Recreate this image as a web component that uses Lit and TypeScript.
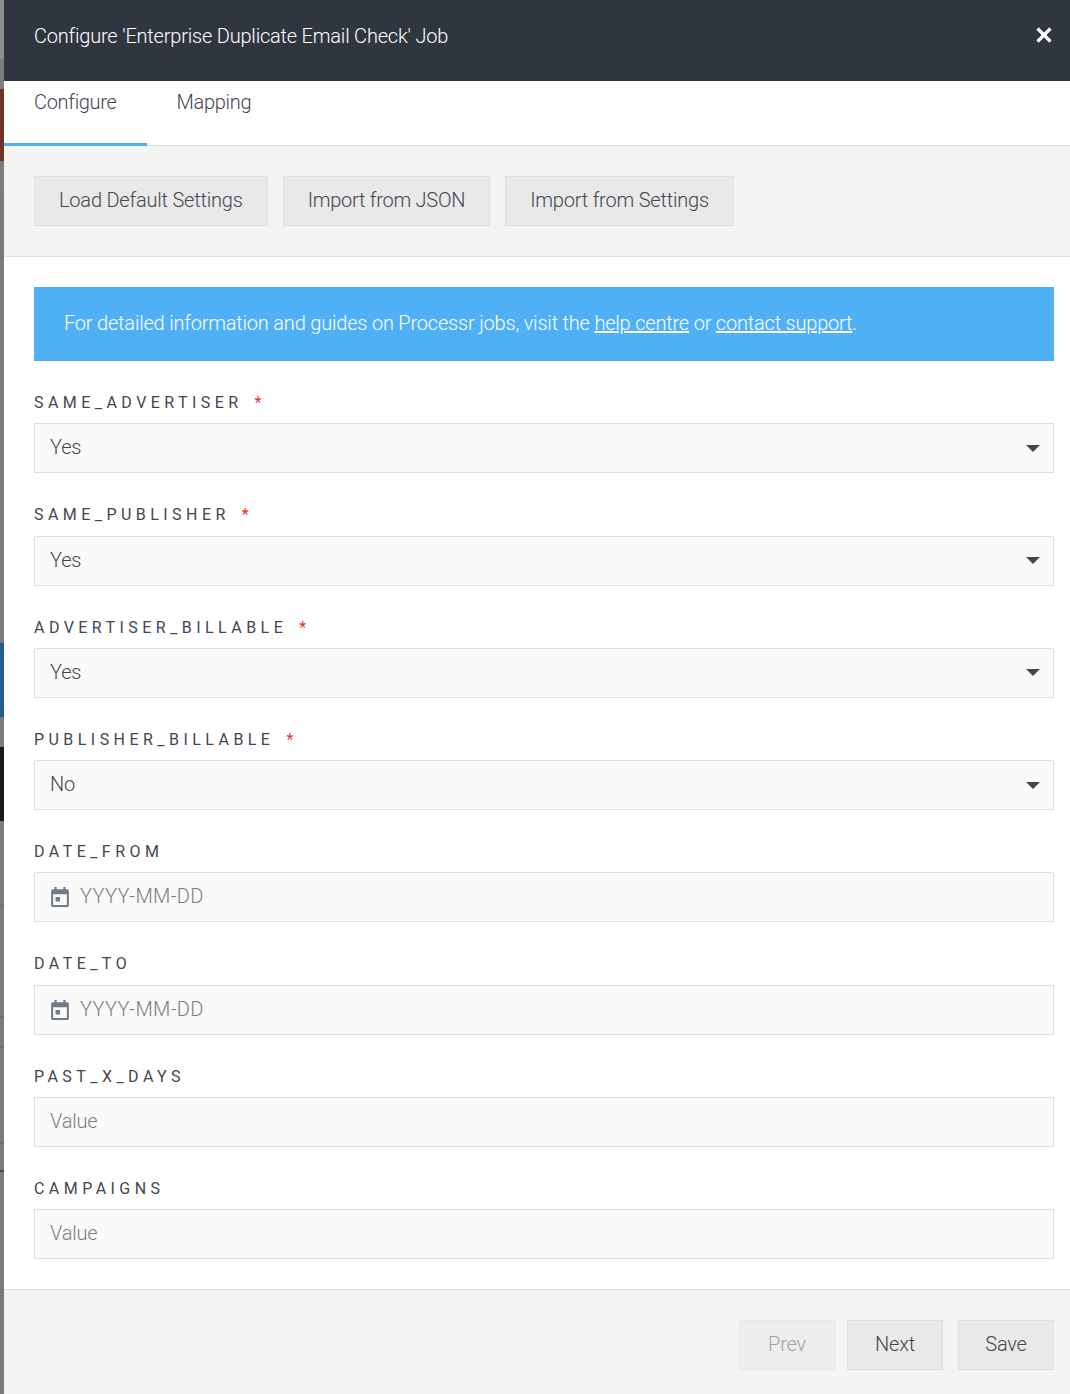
import { LitElement, html, css } from 'lit';
import { customElement } from 'lit/decorators.js';

const strip = [
  { h: 59, c: '#8f8f8f' },
  { h: 30, c: '#7d7d7d' },
  { h: 72, c: '#6e3327' },
  { h: 30, c: '#7d7d7d' },
  { h: 452, c: '#7a7a7a' },
  { h: 74, c: '#26608a' },
  { h: 30, c: '#7a7a7a' },
  { h: 74, c: '#14181f' },
  { h: 84, c: '#7a7a7a' },
  { h: 1, c: '#6c6c6c' },
  { h: 110, c: '#7a7a7a' },
  { h: 1, c: '#6c6c6c' },
  { h: 30, c: '#7a7a7a' },
  { h: 1, c: '#6c6c6c' },
  { h: 95, c: '#7a7a7a' },
  { h: 1, c: '#6c6c6c' },
  { h: 26, c: '#7a7a7a' },
  { h: 2, c: '#4a4a4a' },
  { h: 222, c: '#7a7a7a' },
];

const fields = [
  { label: 'SAME_ADVERTISER', required: true, kind: 'select', value: 'Yes' },
  { label: 'SAME_PUBLISHER', required: true, kind: 'select', value: 'Yes' },
  { label: 'ADVERTISER_BILLABLE', required: true, kind: 'select', value: 'Yes' },
  { label: 'PUBLISHER_BILLABLE', required: true, kind: 'select', value: 'No' },
  { label: 'DATE_FROM', required: false, kind: 'date', value: 'YYYY-MM-DD' },
  { label: 'DATE_TO', required: false, kind: 'date', value: 'YYYY-MM-DD' },
  { label: 'PAST_X_DAYS', required: false, kind: 'text', value: 'Value' },
  { label: 'CAMPAIGNS', required: false, kind: 'text', value: 'Value' },
];

@customElement('app-root')
export class AppRoot extends LitElement {
  static styles = css`
    :host {
      display: flex;
      width: 1070px;
      height: 1394px;
      overflow: hidden;
      font-family: Roboto, "Liberation Sans", sans-serif;
      font-weight: 300;
      font-size: 20px;
      letter-spacing: -0.2px;
      color: #43464f;
      background: #fff;
    }
    .strip {
      width: 4px;
      flex: none;
      display: flex;
      flex-direction: column;
    }
    .panel {
      flex: 1;
      min-width: 0;
      display: flex;
      flex-direction: column;
    }
    .header {
      height: 81px;
      flex: none;
      background: #2f3640;
      color: #fff;
      display: flex;
      align-items: center;
      justify-content: space-between;
      padding: 0 18px 10px 30px;
      box-sizing: border-box;
    }
    .header svg {
      display: block;
      margin-top: -2px;
    }
    .tabs {
      height: 65px;
      flex: none;
      box-sizing: border-box;
      display: flex;
      border-bottom: 1px solid #dedede;
      letter-spacing: -0.3px;
    }
    .tab {
      height: 65px;
      box-sizing: border-box;
      padding: 9px 30px 0;
      line-height: 24px;
    }
    .tab.active {
      border-bottom: 3px solid #4fb0f6;
    }
    .toolbar {
      height: 111px;
      flex: none;
      box-sizing: border-box;
      background: #f4f4f4;
      border-bottom: 1px solid #dedede;
      padding: 30px;
      display: flex;
      gap: 15px;
    }
    .btn {
      height: 50px;
      box-sizing: border-box;
      border: 1px solid #dedede;
      background: #e9e9e9;
      display: flex;
      align-items: center;
      justify-content: center;
      padding: 0 24px 2px;
    }
    .btn.tight {
      letter-spacing: -0.25px;
    }
    .content {
      flex: 1;
      padding: 30px 16px 0 30px;
    }
    .alert {
      height: 74px;
      box-sizing: border-box;
      background: #4fb0f6;
      color: #fff;
      display: flex;
      align-items: center;
      padding: 0 30px 2px;
      white-space: pre;
      margin-bottom: 29.25px;
    }
    .alert a {
      color: inherit;
      text-decoration: underline;
    }
    .field {
      height: 112.25px;
    }
    .label {
      height: 24.5px;
      display: flex;
      align-items: center;
      font-size: 16px;
      font-weight: 400;
      letter-spacing: 4.45px;
      margin-bottom: 8.5px;
    }
    .req {
      color: #e5332a;
      margin-left: 12px;
    }
    .input {
      height: 50px;
      box-sizing: border-box;
      border: 1px solid #dedede;
      background: #fafafa;
      display: flex;
      align-items: center;
      padding: 0 13px 2px 15px;
      justify-content: space-between;
    }
    .input.date {
      justify-content: flex-start;
      gap: 11px;
      padding-left: 16px;
    }
    .input.date svg {
      display: block;
      margin-top: 2px;
    }
    .input.date .placeholder {
      letter-spacing: 0.35px;
    }
    .placeholder {
      color: #7b7e84;
    }
    .caret {
      width: 0;
      height: 0;
      margin-top: 2px;
      border-left: 7px solid transparent;
      border-right: 7px solid transparent;
      border-top: 7px solid #43464f;
    }
    .footer {
      height: 105px;
      flex: none;
      box-sizing: border-box;
      background: #f4f4f4;
      border-top: 1px solid #dedede;
      padding: 30px 16px 0 0;
      display: flex;
      justify-content: flex-end;
    }
    .footer .btn {
      width: 96px;
      padding: 0 0 2px;
      margin-left: 15px;
    }
    .footer .btn.prev {
      background: #eeeeee;
      border-color: #e8e8e8;
      color: #a3a3a6;
      margin-right: -3px;
    }
  `;

  private calendar() {
    return html`<svg width="18" height="20" viewBox="2 1 16 18" fill="#6f7a8a">
      <path d="M5 1h2v2h6V1h2v2h1.500A1.500 1.500 0 0 1 18 4.500V17.500A1.500 1.500 0 0 1 16.500 19h-13A1.500 1.500 0 0 1 2 17.500V4.500A1.500 1.500 0 0 1 3.500 3H5zM3.800 7.500v9.700h12.400V7.500zM6 10h4v4H6z" fill-rule="evenodd"/>
    </svg>`;
  }

  private renderField(f: (typeof fields)[number]) {
    return html`<div class="field">
      <div class="label">${f.label}${f.required ? html`<span class="req">*</span>` : ''}</div>
      ${f.kind === 'select'
        ? html`<div class="input"><span>${f.value}</span><span class="caret"></span></div>`
        : f.kind === 'date'
          ? html`<div class="input date">${this.calendar()}<span class="placeholder">${f.value}</span></div>`
          : html`<div class="input"><span class="placeholder">${f.value}</span></div>`}
    </div>`;
  }

  render() {
    return html`
      <div class="strip">
        ${strip.map((s) => html`<div style="height:${s.h}px;background:${s.c}"></div>`)}
      </div>
      <div class="panel">
        <div class="header">
          <span>Configure 'Enterprise Duplicate Email Check' Job</span>
          <svg width="16" height="16" viewBox="0 0 16 16" stroke="#fff" stroke-width="3.200">
            <path d="M1.500 1.500l13 13M14.500 1.500l-13 13"/>
          </svg>
        </div>
        <div class="tabs">
          <div class="tab active">Configure</div>
          <div class="tab">Mapping</div>
        </div>
        <div class="toolbar">
          <div class="btn">Load Default Settings</div>
          <div class="btn tight">Import from JSON</div>
          <div class="btn">Import from Settings</div>
        </div>
        <div class="content">
          <div class="alert">For detailed information and guides on Processr jobs, visit the <a>help centre</a> or <a>contact support</a>.</div>
          ${fields.map((f) => this.renderField(f))}
        </div>
        <div class="footer">
          <div class="btn prev">Prev</div>
          <div class="btn">Next</div>
          <div class="btn">Save</div>
        </div>
      </div>
    `;
  }
}
